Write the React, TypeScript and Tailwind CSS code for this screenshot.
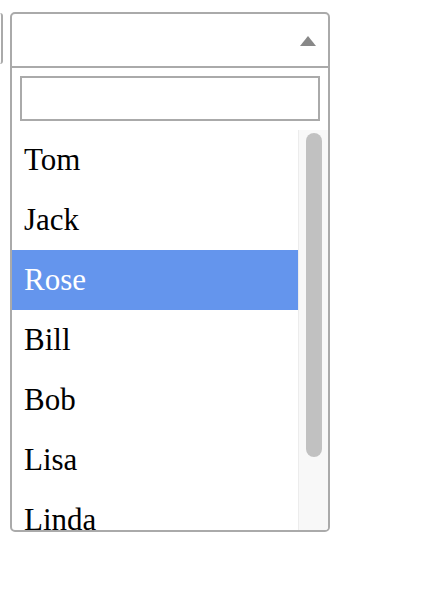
import React from "react";

const names = ["Tom", "Jack", "Rose", "Bill", "Bob", "Lisa", "Linda"];

const App = () => {
  const selected = "Rose";
  return (
    <div className="flex items-start pt-[12px] bg-white min-h-[594px] w-[448px]">
      {/* edge of the previous control */}
      <div className="w-[3px] h-[51px] mt-[1px] border-r-2 border-[#aaaaaa] rounded-r-[4px]" />

      <div className="ml-[7px] w-[320px] h-[520px] border-2 border-[#aaaaaa] rounded-[5px] flex flex-col overflow-hidden">
        {/* header */}
        <div className="h-[54px] shrink-0 border-b-2 border-[#aaaaaa] flex items-center justify-end pr-[12px]">
          <div className="w-0 h-0 border-l-[8px] border-r-[8px] border-b-[10px] border-l-transparent border-r-transparent border-b-[#888888] mt-[2px]" />
        </div>

        {/* search */}
        <div className="px-[8px] pt-[8px] pb-[9px] shrink-0">
          <input
            type="text"
            className="block w-full h-[45px] border-2 border-[#aaaaaa] outline-none bg-white"
          />
        </div>

        {/* list */}
        <div className="flex flex-1 min-h-0 overflow-hidden">
          <ul className="flex-1 overflow-hidden">
            {names.map((n) => (
              <li
                key={n}
                className={
                  "h-[60px] leading-[60px] pl-[12px] text-[31px] font-['Liberation_Serif','Times_New_Roman',serif] " +
                  (n === selected ? "bg-[#6495ed] text-white" : "text-black")
                }
              >
                {n}
              </li>
            ))}
          </ul>
          <div className="w-[30px] shrink-0 bg-[#f8f8f8] border-l border-[#ececec] pt-[3px] pl-[7px]">
            <div className="w-[16px] h-[324px] rounded-full bg-[#c1c1c1]" />
          </div>
        </div>
      </div>
    </div>
  );
};

export default App;
